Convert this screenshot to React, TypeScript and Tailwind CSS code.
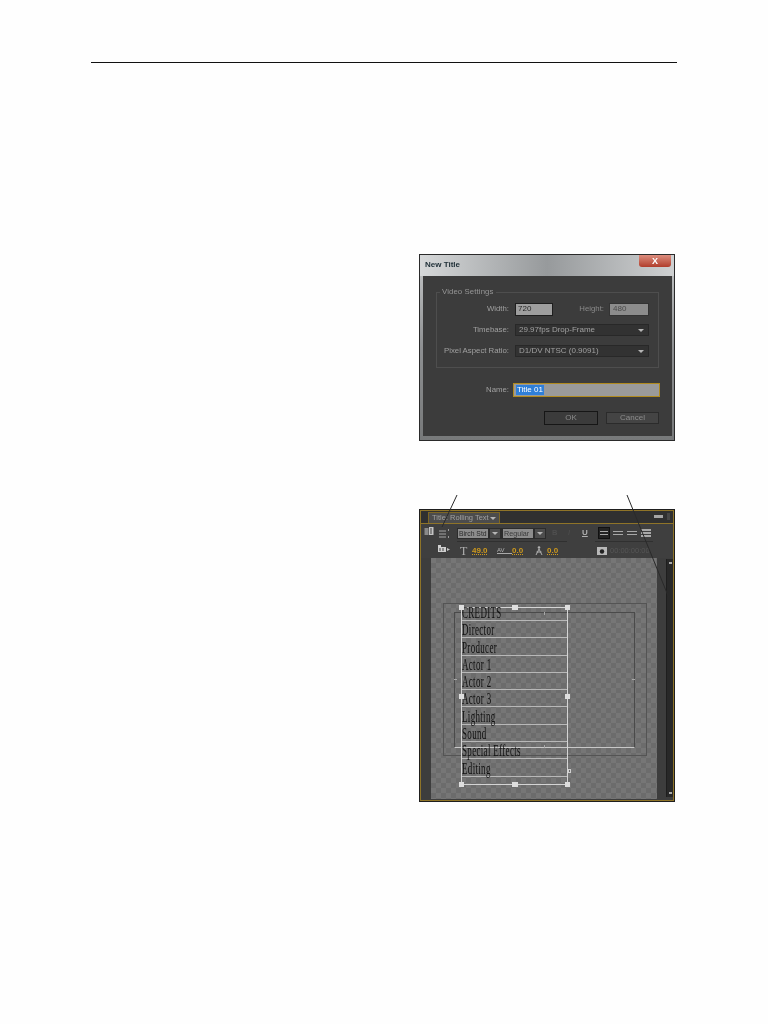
import React from "react";

function Caret() {
  return <span className="w-0 h-0 border-x-[3px] border-x-transparent border-t-[3px] border-t-[#b5b5b5]" />;
}

function Select({ text }: { text: string }) {
  return (
    <div className="ml-[6px] h-[12px] w-[134px] bg-[#323232] border border-[#282828] flex items-center justify-between pl-[3px] pr-[4px] text-[#a0a0a0]">
      <span className="text-[8px] leading-none">{text}</span>
      <Caret />
    </div>
  );
}

function Label({ text, w = "w-[73px]" }: { text: string; w?: string }) {
  return <span className={`${w} text-right text-[7.8px] text-[#a0a0a0] leading-none whitespace-nowrap`}>{text}</span>;
}

function Dialog() {
  return (
    <div className="w-[256px] h-[187px] border border-[#2a2a2a] flex flex-col bg-gradient-to-b from-[#c6c8c9] via-[#8e9092] to-[#77797a] blur-[0.4px]">
      <div className="h-[21px] shrink-0 bg-gradient-to-r from-[#d6d8d9] via-[#979a9c] to-[#cfd1d2] flex items-start justify-between pl-[5px] pr-[3px]">
        <span className="text-[8px] font-bold text-[#22323a] mt-[6px] leading-none">New Title</span>
        <span className="w-[32px] h-[12px] bg-gradient-to-b from-[#dc8d7e] to-[#b03c2b] rounded-b-[3px] flex items-center justify-center text-white text-[9px] font-bold leading-none">X</span>
      </div>
      <div className="flex-1 ml-[3px] mr-[2px] mb-[4px] bg-[#3c3c3c] flex flex-col pl-[13px]">
        <div className="relative mt-[16px] w-[223px] h-[76px] border border-[#4e4e4e] flex flex-col">
          <span className="absolute -top-[5px] left-[3px] bg-[#3c3c3c] px-[2px] text-[7.8px] leading-none tracking-[0.1px] text-[#969696]">Video Settings</span>
          <div className="flex items-center mt-[9px] h-[14px]">
            <Label text="Width:" w="w-[72px]" />
            <span className="ml-[6px] w-[38px] h-[13px] bg-[#9e9e9e] border border-[#1e1e1e] text-[8px] text-[#262626] leading-none pl-[2px] flex items-center">720</span>
            <span className="w-[51px] text-right text-[7.8px] text-[#8a8a8a] leading-none">Height:</span>
            <span className="ml-[5px] w-[40px] h-[13px] bg-[#8c8c8c] border border-[#333] text-[8px] text-[#4a4a4a] leading-none pl-[3px] flex items-center">480</span>
          </div>
          <div className="flex items-center mt-[8px]">
            <Label text="Timebase:" w="w-[72px]" />
            <Select text="29.97fps Drop-Frame" />
          </div>
          <div className="flex items-center mt-[9px]">
            <Label text="Pixel Aspect Ratio:" w="w-[72px]" />
            <Select text="D1/DV NTSC (0.9091)" />
          </div>
        </div>
        <div className="flex items-center mt-[15px] h-[14px]">
          <Label text="Name:" />
          <div className="ml-[4px] w-[147px] h-[14px] bg-[#9a9a9a] border border-[#b08a1e] flex items-center pl-[2px]">
            <span className="bg-[#2f7fd8] text-white text-[8px] leading-none px-[1px] py-[1px]">Title 01</span>
          </div>
        </div>
        <div className="flex items-center mt-[14px] ml-[108px] gap-[8px]">
          <span className="w-[54px] h-[14px] bg-[#3b3b3b] border border-[#161616] flex items-center justify-center text-[8px] text-[#8a8a8a] leading-none">OK</span>
          <span className="w-[53px] h-[12px] bg-[#444] border border-[#2b2b2b] flex items-center justify-center text-[8px] text-[#8d8d8d] leading-none">Cancel</span>
        </div>
      </div>
    </div>
  );
}

const rows = ["CREDITS", "Director", "Producer", "Actor 1", "Actor 2", "Actor 3", "Lighting", "Sound", "Special Effects", "Editing"];

function Handle({ className }: { className: string }) {
  return <span className={`absolute w-[5px] h-[5px] bg-[#dedede] ${className}`} />;
}

function Canvas() {
  return (
    <div className="relative w-[226px] h-[241px] bg-[repeating-conic-gradient(#6c6c6c_0_25%,#767676_0_50%)] bg-[length:10px_10px] overflow-hidden blur-[0.3px]">
      <div className="absolute left-[12px] top-[45px] w-[204px] h-[153px] border border-[#545454]" />
      <div className="absolute left-[23px] top-[54px] w-[181px] h-[136px] border border-[#4a4a4a] border-b-[#c8c8c8]" />
      <span className="absolute left-[23px] top-[121px] w-[3px] h-px bg-[#a8a8a8]" />
      <span className="absolute left-[201px] top-[121px] w-[3px] h-px bg-[#a8a8a8]" />
      <span className="absolute left-[113px] top-[54px] w-px h-[3px] bg-[#a8a8a8]" />
      <span className="absolute left-[113px] top-[187px] w-px h-[3px] bg-[#a8a8a8]" />
      <div className="absolute left-[30px] top-[49px] w-[107px] h-[178px] border border-[#d4d4d4] flex flex-col">
        {rows.map((r, i) => (
          <div key={r} className={`${i === 0 ? "h-[13px]" : "h-[17.3px]"} shrink-0 border-b border-[#b8b8b8] flex items-end`}>
            <span className="inline-block origin-bottom-left scale-x-[0.56] whitespace-nowrap font-['Liberation_Serif',serif] text-[#101010] text-[16px] leading-[15px] tracking-[0.6px]">{r}</span>
          </div>
        ))}
        <Handle className="-left-[3px] -top-[3px]" />
        <Handle className="left-[50px] -top-[3px] w-[6px]" />
        <Handle className="-right-[3px] -top-[3px]" />
        <Handle className="-left-[3px] top-[86px]" />
        <Handle className="-right-[3px] top-[86px]" />
        <Handle className="-left-[3px] -bottom-[3px]" />
        <Handle className="left-[50px] -bottom-[3px] w-[6px]" />
        <Handle className="-right-[3px] -bottom-[3px]" />
        <span className="absolute -right-[4px] bottom-[11px] w-[3px] h-[4px] border border-[#d0d0d0]" />
      </div>
    </div>
  );
}

function AlignIcon({ active, rows: n = 2 }: { active?: boolean; rows?: number }) {
  return (
    <span className={`w-[12px] h-[12px] flex flex-col justify-center gap-[1.5px] px-[1px] ${active ? "bg-[#232323] border border-[#111]" : ""}`}>
      {Array.from({ length: n }).map((_, i) => (
        <span key={i} className="h-[1.5px] bg-[#a8a8a8]" />
      ))}
    </span>
  );
}

function Toolbar() {
  return (
    <div className="h-[34px] shrink-0 bg-[#3f3f3f] flex blur-[0.35px]">
      <div className="w-[36px] shrink-0 flex flex-col pt-[3px]">
        <div className="flex items-start pl-[3px] gap-[5px]">
          <svg width="10" height="9" viewBox="0 0 10 9" className="shrink-0">
            <rect x="0.5" y="1" width="4" height="7" fill="#8a8a8a" />
            <rect x="5" y="0" width="4.5" height="8" fill="#c4c4c4" />
            <path d="M6 2h2M6 4h2M6 6h2" stroke="#444" />
          </svg>
          <svg width="11" height="10" viewBox="0 0 11 10" className="shrink-0 mt-[2px]">
            <path d="M0 2h7M0 5h7M0 8h7" stroke="#a5a5a5" />
            <path d="M9.5 0v2M9.5 7v2" stroke="#9a9a9a" />
          </svg>
        </div>
        <svg width="12" height="7" viewBox="0 0 12 7" className="ml-[17px] mt-[6px]">
          <rect x="0" y="0" width="3" height="2" fill="#d0d0d0" />
          <rect x="0" y="2" width="8" height="5" fill="#d0d0d0" />
          <path d="M2 3v3M5 3v3" stroke="#444" />
          <path d="M9 3l3 1.5L9 6z" fill="#c4c4c4" />
        </svg>
      </div>
      <div className="flex flex-col pt-[3px]">
        <div className="flex items-center h-[12px]">
          <div className="w-[89px] h-[11px] bg-[#2c2c2c] flex items-center pl-[1px] gap-[2px]">
            <span className="w-[30px] h-[9px] bg-[#8c8c8c] text-[6.8px] leading-[9px] text-[#2a2a2a] pl-[1px] whitespace-nowrap">Birch Std</span>
            <span className="w-[10px] h-[9px] bg-[#4d4d4d] flex items-center justify-center"><Caret /></span>
            <span className="ml-[1px] w-[30px] h-[9px] bg-[#8c8c8c] text-[7.2px] leading-[9px] text-[#3a3a3a] pl-[1px] whitespace-nowrap">Regular</span>
            <span className="w-[10px] h-[9px] bg-[#4d4d4d] flex items-center justify-center"><Caret /></span>
          </div>
          <span className="ml-[6px] w-[16px] text-[7.5px] font-bold text-[#4f4f4f] leading-none">B</span>
          <span className="w-[14px] text-[7.5px] italic text-[#4f4f4f] leading-none">I</span>
          <span className="w-[16px] text-[8px] font-bold underline text-[#b0b0b0] leading-none">U</span>
          <div className="flex gap-[2px]">
            <AlignIcon active />
            <AlignIcon />
            <AlignIcon />
            <AlignIcon rows={3} />
          </div>
        </div>
        <div className="flex mt-[2px] h-px">
          <span className="w-[110px] bg-[#303030]" />
          <span className="ml-[28px] w-[58px] bg-[#303030]" />
        </div>
        <div className="flex items-center mt-[3px] h-[11px]">
          <span className="ml-[3px] w-[12px] font-['Liberation_Serif',serif] text-[12px] leading-none text-[#b0b0b0]">T</span>
          <span className="w-[25px] text-[8px] font-bold leading-none underline decoration-dotted text-[#cf9a1c]">49.0</span>
          <span className="w-[15px] text-[6px] leading-none border-b border-[#aaa] text-[#b0b0b0]">AV</span>
          <span className="w-[23px] text-[8px] font-bold leading-none underline decoration-dotted text-[#cf9a1c]">0.0</span>
          <svg width="8" height="10" viewBox="0 0 8 10" className="shrink-0 mr-[4px]">
            <circle cx="4" cy="1.5" r="1.3" fill="#b0b0b0" />
            <path d="M4 3L1 9M4 3l3 6M1.5 6h5" stroke="#b0b0b0" fill="none" />
          </svg>
          <span className="w-[50px] text-[8px] font-bold leading-none underline decoration-dotted text-[#cf9a1c]">0.0</span>
          <svg width="10" height="8" viewBox="0 0 10 8" className="shrink-0 mr-[3px]">
            <rect width="10" height="8" fill="#b8b8b8" />
            <circle cx="5" cy="4.5" r="2.2" fill="#222" />
          </svg>
          <span className="text-[7.5px] leading-none text-[#565656] whitespace-nowrap">00:00:00:00</span>
        </div>
      </div>
    </div>
  );
}

function Panel() {
  return (
    <div className="w-[256px] h-[293px] border border-[#1e1e1e]">
      <div className="h-full border border-[#8f7428] flex flex-col bg-[#3d3d3d]">
        <div className="h-[13px] shrink-0 bg-[#303030] border-b border-[#8f7428] flex items-end pl-[7px]">
          <div className="w-[72px] h-[11px] bg-[#4c4c4c] border-x border-t border-[#7d6624] flex items-center justify-between pl-[3px] pr-[3px] blur-[0.35px]">
            <span className="text-[7.5px] leading-none text-[#a0a0a0] whitespace-nowrap">Title: Rolling Text</span>
            <Caret />
          </div>
          <div className="flex-1 flex justify-end items-center gap-[4px] pr-[3px] pb-[3px]">
            <span className="w-[9px] h-[3px] bg-[#a5a5a5]" />
            <span className="w-[3px] h-[7px] bg-[#474747]" />
          </div>
        </div>
        <Toolbar />
        <div className="flex flex-1 pl-[10px]">
          <Canvas />
          <div className="ml-[9px] mt-[1px] w-[7px] h-[238px] bg-[#282828] border-l border-[#1e1e1e] flex flex-col justify-between items-center py-[3px]">
            <span className="w-[3px] h-[2px] bg-[#aaa]" />
            <span className="w-[3px] h-[2px] bg-[#aaa]" />
          </div>
        </div>
      </div>
    </div>
  );
}

export default function App() {
  return (
    <div className="relative w-[768px] h-[1024px] bg-[#fefefe] overflow-hidden font-['Liberation_Sans',Arial,sans-serif]">
      <div className="pt-[62px] pl-[91px]">
        <div className="w-[586px] h-px bg-[#111]" />
      </div>
      <div className="ml-[419px] w-[256px] mt-[191px] flex flex-col gap-[68px]">
        <Dialog />
        <Panel />
      </div>
      <svg className="absolute inset-0 pointer-events-none" width="768" height="1024">
        <line x1="457" y1="495" x2="442" y2="527" stroke="#2a2a2a" strokeWidth="1" />
        <line x1="627" y1="495" x2="669" y2="598" stroke="#2a2a2a" strokeWidth="1" />
      </svg>
    </div>
  );
}
